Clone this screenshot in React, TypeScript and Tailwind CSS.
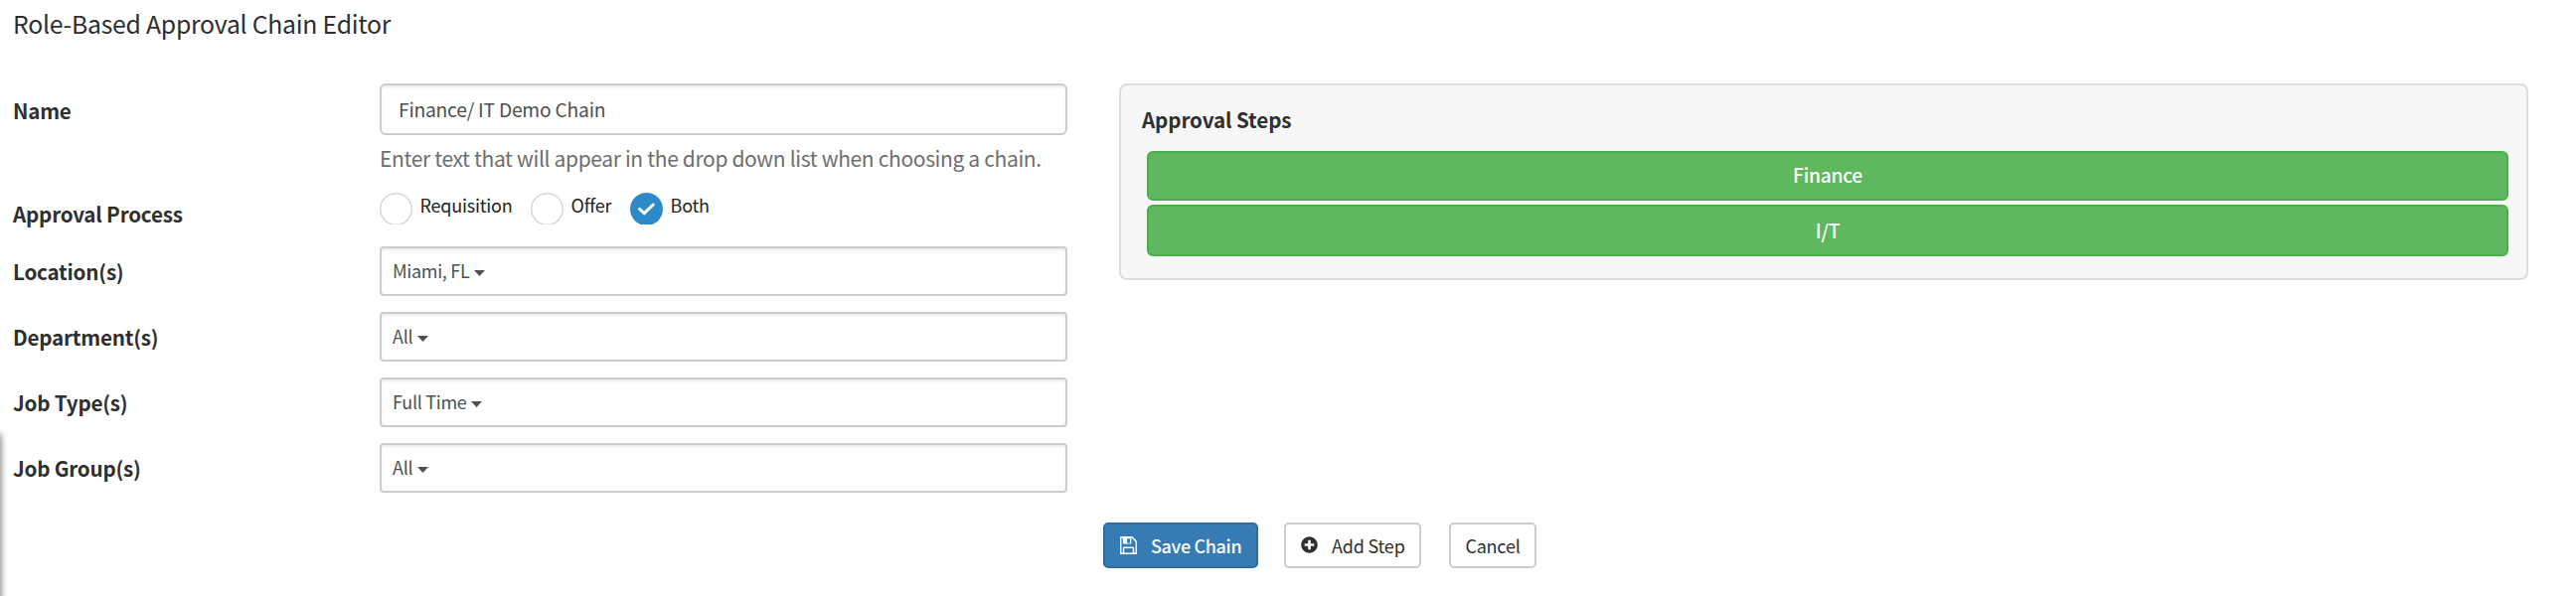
import React, { useState } from "react";
import { FaPlusCircle } from "react-icons/fa";

interface Filter {
  id: string;
  label: string;
  value: string;
}

const filters: Filter[] = [
  { id: "location", label: "Location(s)", value: "Miami, FL" },
  { id: "department", label: "Department(s)", value: "All" },
  { id: "jobType", label: "Job Type(s)", value: "Full Time" },
  { id: "jobGroup", label: "Job Group(s)", value: "All" },
];

const steps = [
  { name: "Finance", size: "h-[50px] pb-[2px]" },
  { name: "I/T", size: "h-[52px]" },
];

const SaveIcon: React.FC = () => (
  <svg className="h-[18px] w-[17px] shrink-0" viewBox="0 0 1536 1536" preserveAspectRatio="none" fill="currentColor">
    <g transform="translate(0 1536) scale(1 -1)">
      <path d="M384 128h768v384h-768v-384zM1280 128h128v896q0 14 -10 38.500t-20 34.500l-281 281q-10 10 -34 20t-39 10v-416q0 -40 -28 -68t-68 -28h-576q-40 0 -68 28t-28 68v416h-128v-1280h128v416q0 40 28 68t68 28h832q40 0 68 -28t28 -68v-416zM896 992v320q0 13 -9.500 22.500t-22.500 9.500h-192q-13 0 -22.500 -9.500t-9.500 -22.500v-320q0 -13 9.500 -22.500t22.500 -9.500h192q13 0 22.500 9.500t9.500 22.500zM1536 1024v-928q0 -40 -28 -68t-68 -28h-1344q-40 0 -68 28t-28 68v1344q0 40 28 68t68 28h928q40 0 88 -20t76 -48l280 -280q28 -28 48 -76t20 -88z" />
    </g>
  </svg>
);

const RadioMark: React.FC<{ checked: boolean }> = ({ checked }) => (
  <svg className="h-[32px] w-[33px] shrink-0" viewBox="0 0 33 32" fill="none">
    {checked ? (
      <>
        <circle cx="16.5" cy="16.5" r="16.5" fill="#2d8ac7" />
        <path d="M9.500 16.300L14.300 20.600L23.200 12" stroke="#fff" strokeWidth="3" strokeLinecap="round" />
      </>
    ) : (
      <circle cx="16.5" cy="16.500" r="15.800" stroke="#d9d6d1" strokeWidth="1.400" fill="#fff" />
    )}
  </svg>
);

const App: React.FC = () => {
  const [name, setName] = useState<string>("Finance/ IT Demo Chain");
  const [process, setProcess] = useState<string>("Both");

  const getRadioWidth = (option: string) => {
    switch (option) {
      case "Requisition":
        return "w-[152px]";
      case "Offer":
        return "w-[100px]";
      default:
        return "w-[90px]";
    }
  };

  return (
    <div className="relative h-[600px] w-[2592px] overflow-hidden bg-white font-['Noto_Sans_CJK_SC','Noto_Sans',sans-serif] text-[#2f2f2f]">
      <h1 className="h-[84px] pl-[13px] text-[24.8px] leading-[47px] tracking-[-0.25px]">
        Role-Based Approval Chain Editor
      </h1>

      <div className="flex items-start pl-[13px]">
        <div className="w-[1061px]">
          <div className="flex h-[98px]">
            <label htmlFor="name" className="w-[369px] text-[20.6px] leading-[55px] font-bold tracking-[-0.2px]">
              Name
            </label>
            <div className="w-[692px]">
              <input
                id="name"
                value={name}
                onChange={(e) => setName(e.target.value)}
                className="block h-[52px] w-full rounded-[6px] border-2 border-[#ccc] px-[17px] pb-px text-[19.3px] tracking-[-0.24px] text-[#505050] shadow-[inset_0_2px_2px_rgba(0,0,0,0.075)] focus:outline-none"
              />
              <p className="text-[21px] leading-[47px] tracking-[-0.35px] whitespace-nowrap text-[#6e6e6e]">
                Enter text that will appear in the drop down list when choosing a chain.
              </p>
            </div>
          </div>

          <div className="flex h-[66px]">
            <span className="w-[369px] text-[20.6px] leading-[67px] font-bold tracking-[-0.2px]">
              Approval Process
            </span>
            <div className="flex pt-[12px]">
              {["Requisition", "Offer", "Both"].map((option) => (
                <button
                  key={option}
                  type="button"
                  onClick={() => setProcess(option)}
                  className={`flex h-[32px] items-start gap-[7.5px] text-[18px] leading-[25px] tracking-[-0.2px] text-[#222] ${getRadioWidth(option)}`}
                >
                  <RadioMark checked={process === option} />
                  {option}
                </button>
              ))}
            </div>
          </div>

          <div className="flex flex-col gap-4">
            {filters.map((filter) => (
              <div key={filter.id} className="flex h-[50px]">
                <span className="w-[369px] text-[20.6px] leading-[51px] font-bold tracking-[-0.2px]">
                  {filter.label}
                </span>
                <button
                  type="button"
                  className="flex w-[692px] items-center gap-[5px] rounded-[4px] border-2 border-[#ccc] pb-px pl-[11px] text-[18px] leading-[45px] tracking-[-0.3px] text-[#505050] shadow-[inset_0_2px_2px_rgba(0,0,0,0.075)]"
                >
                  {filter.value}
                  <svg className="mt-[5px] h-[6px] w-[11px]" viewBox="0 0 11 6" fill="currentColor">
                    <path d="M0 0h11L5.500 6z" />
                  </svg>
                </button>
              </div>
            ))}
          </div>
        </div>

        <div className="ml-[52px] h-[198px] w-[1418px] rounded-[8px] border-2 border-[#ddd] bg-[#f7f7f7] pt-[10px] pr-[18px] pl-[21px]">
          <h2 className="h-[56px] text-[20.6px] leading-[48px] font-bold tracking-[-0.1px]">Approval Steps</h2>
          <div className="ml-[5px] flex flex-col gap-1">
            {steps.map((step) => (
              <div
                key={step.name}
                className={`flex items-center justify-center rounded-[6px] border-2 border-[#4cae4c] bg-[#5fb760] text-[19.3px] leading-[40px] font-medium tracking-[-0.3px] text-white ${step.size}`}
              >
                {step.name}
              </div>
            ))}
          </div>
        </div>
      </div>

      <div className="mt-[30px] flex h-[46px] pl-[1110px] text-[18px] leading-[40px] tracking-[-0.2px]">
        <button
          type="button"
          className="flex w-[156px] items-center gap-[14px] rounded-[5px] border-2 border-[#2e6da4] bg-[#377bb5] pb-px pl-[15px] font-medium tracking-[-0.35px] whitespace-nowrap text-white"
        >
          <SaveIcon />
          Save Chain
        </button>
        <button
          type="button"
          className="ml-[26px] flex w-[138px] items-center gap-[14px] rounded-[5px] border-2 border-[#ccc] bg-white pb-px pl-[15px] whitespace-nowrap"
        >
          <FaPlusCircle className="h-[17px] w-[17px] shrink-0" />
          Add Step
        </button>
        <button
          type="button"
          className="ml-[28px] flex w-[88px] items-center justify-center rounded-[5px] border-2 border-[#ccc] bg-white pb-px"
        >
          Cancel
        </button>
      </div>

      {/* shadow cast by the side panel */}
      <div className="absolute top-[438px] left-[-10px] h-[200px] w-[10px] shadow-[0_0_6px_1px_rgba(0,0,0,0.5)]" />
    </div>
  );
};

export default App;
